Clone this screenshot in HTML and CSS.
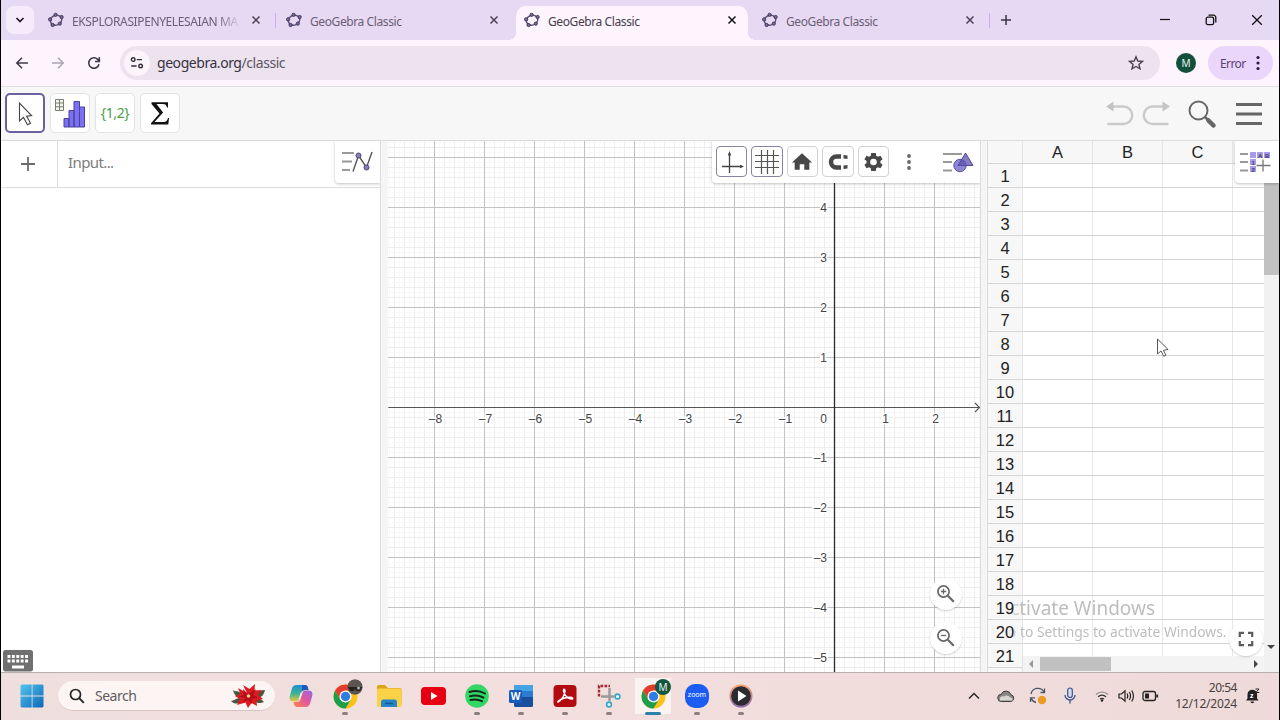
FILE: index.html
```
<!DOCTYPE html>
<html lang="en">
<head>
    <meta charset="UTF-8">
    <meta name="viewport" content="width=device-width, initial-scale=1.0">
    <title>GeoGebra Classic</title>
    <link rel="stylesheet" href="styles.css">
</head>
<body>
    <svg class="defs" width="0" height="0">
        <symbol id="gg" viewBox="0 0 16 16">
            <ellipse cx="8" cy="8.2" rx="5.8" ry="4.9" transform="rotate(-18 8 8)" fill="none" stroke="#5d5377" stroke-width="1.5"/>
            <g fill="#776d96" stroke="#42395a" stroke-width="1">
                <circle cx="7.6" cy="2.8" r="1.6"/><circle cx="13.6" cy="5" r="1.6"/><circle cx="11.8" cy="11.6" r="1.6"/><circle cx="4.6" cy="13" r="1.6"/><circle cx="2.1" cy="7.4" r="1.6"/>
            </g>
        </symbol>
        <symbol id="x" viewBox="0 0 10 10"><path d="M1.5 1.5l7 7M8.5 1.5l-7 7" stroke="currentColor" stroke-width="1.5" fill="none"/></symbol>
        <symbol id="chrome" viewBox="0 0 24 24">
            <circle cx="12" cy="12" r="11.5" fill="#fbc116"/>
            <path d="M2 6.3A11.5 11.5 0 0 1 22 6.3H12L7 15z" fill="#e33b2e"/>
            <path d="M2 6.3A11.5 11.5 0 0 0 12 23.5L17 15 12 17 7 15z" fill="#1e9e4b"/>
            <circle cx="12" cy="12" r="5.8" fill="#fff"/><circle cx="12" cy="12" r="4.5" fill="#2f7de1"/>
        </symbol>
    </svg>

    <div class="tabstrip">
        <div class="tab-search"><svg width="10" height="10" viewBox="0 0 10 10"><path d="M1.5 3l3.5 3.5L8.5 3" stroke="#1f1a26" stroke-width="1.7" fill="none"/></svg></div>
        <div class="tab">
            <svg class="fav"><use href="#gg"/></svg>
            <span class="title long">EKSPLORASIPENYELESAIAN MA</span>
            <svg class="close"><use href="#x"/></svg>
        </div>
        <div class="tab sep">
            <svg class="fav"><use href="#gg"/></svg>
            <span class="title">GeoGebra Classic</span>
            <svg class="close"><use href="#x"/></svg>
        </div>
        <div class="tab active">
            <svg class="fav"><use href="#gg"/></svg>
            <span class="title">GeoGebra Classic</span>
            <svg class="close"><use href="#x"/></svg>
        </div>
        <div class="tab">
            <svg class="fav"><use href="#gg"/></svg>
            <span class="title">GeoGebra Classic</span>
            <svg class="close"><use href="#x"/></svg>
        </div>
        <div class="new-tab"><svg width="12" height="12" viewBox="0 0 12 12"><path d="M6 1v10M1 6h10" stroke="#3b3345" stroke-width="1.5"/></svg></div>
        <div class="window-buttons">
            <svg width="12" height="12" viewBox="0 0 12 12"><path d="M1 5.5h10" stroke="#111" stroke-width="1.2"/></svg>
            <svg width="12" height="12" viewBox="0 0 12 12"><g fill="none" stroke="#111" stroke-width="1.3"><rect x="1.2" y="3.2" width="7.4" height="7.4" rx="1.6"/><path d="M3.5 1.2h5a2.3 2.3 0 0 1 2.3 2.3v5"/></g></svg>
            <svg width="12" height="12" viewBox="0 0 12 12"><path d="M1.2 1.2l9.6 9.6M10.8 1.2l-9.6 9.6" stroke="#111" stroke-width="1.3"/></svg>
        </div>
    </div>

    <div class="navbar">
        <div class="nav-buttons">
            <svg width="14" height="14" viewBox="0 0 14 14"><path d="M13 7H2M7 1.8L1.8 7 7 12.2" fill="none" stroke="#3f3847" stroke-width="1.5"/></svg>
            <svg width="14" height="14" viewBox="0 0 14 14"><path d="M1 7h11M7 1.8L12.2 7 7 12.2" fill="none" stroke="#aaa3b0" stroke-width="1.4"/></svg>
            <svg width="14" height="14" viewBox="0 0 14 14"><path d="M12 8.2a5.2 5.2 0 1 1-1.3-4.8L12 4.8M12.3 1.3v4.2H8" fill="none" stroke="#3f3847" stroke-width="1.6"/></svg>
        </div>
        <div class="address">
            <div class="site-info"><svg width="14" height="14" viewBox="0 0 14 14"><g fill="none" stroke="#35303c" stroke-width="1.4"><circle cx="3.2" cy="3.6" r="1.8"/><path d="M6.8 3.6H12M1.2 10H6.6"/><circle cx="10.6" cy="10" r="1.8"/></g></svg></div>
            <span class="url">geogebra.org<span class="path">/classic</span></span>
            <svg class="star" width="16" height="16" viewBox="0 0 16 16"><path d="M8 1.8l1.8 4.2 4.6.4-3.500 3 1.100 4.500L8 11.500l-4 2.400 1.100-4.500-3.500-3 4.600-.4z" fill="none" stroke="#4a4351" stroke-width="1.4"/></svg>
        </div>
        <div class="avatar">M</div>
        <div class="error"><span>Error</span><svg width="4" height="16" viewBox="0 0 4 16"><g fill="#2d1b46"><circle cx="2" cy="2.5" r="1.6"/><circle cx="2" cy="8" r="1.6"/><circle cx="2" cy="13.5" r="1.6"/></g></svg></div>
    </div>

    <div class="toolbar">
        <div class="tool selected"><svg width="36" height="36" viewBox="0 0 36 36"><path d="M12.500 8v18l4-3.600 4 7.400 3-1.500-3.900-7.200 5-.6z" fill="#fff" stroke="#444" stroke-width="1.100"/></svg></div>
        <div class="tool"><svg width="36" height="36" viewBox="0 0 36 36">
            <path d="M3.500 4.500h8v11h-8zM7.500 4.500v11M3.500 8h8M3.500 11.800h8" fill="#f2f2ee" stroke="#788074" stroke-width="1"/>
            <path d="M12 23.500h5v8.500h-5zM17 15.500h5V32h-5zM22 6.500h5.500V32H22zM27.500 12h5v20h-5z" fill="#7b70f2" stroke="#4b429c" stroke-width="1"/>
        </svg></div>
        <div class="tool braces">{1,2}</div>
        <div class="tool sigma"><svg width="36" height="36" viewBox="0 0 36 36"><path d="M9.500 7.300H26v5.200h-1c-.6-2.400-1.500-3.500-4.200-3.500h-6.300l6.600 8.600-8.600 9.300h8.900c2.900 0 3.800-1.300 4.600-3.900h1L26.300 29.500H9v-1.300l8.500-9.800-8-9.500z" fill="#111"/></svg></div>
        <div class="toolbar-right">
            <svg width="28" height="26" viewBox="0 0 28 26"><path d="M7 5.500h10.500a8.700 8.700 0 0 1 0 17.500H1.500" fill="none" stroke="#cacaca" stroke-width="2.400"/><path d="M0 5.500L7.500.5v10z" fill="#c4c4c4"/></svg>
            <svg width="28" height="26" viewBox="0 0 28 26"><path d="M21 5.500H10.500a8.700 8.700 0 0 0 0 17.500h16" fill="none" stroke="#cacaca" stroke-width="2.400"/><path d="M28 5.500L20.500.5v10z" fill="#c4c4c4"/></svg>
            <svg class="find" width="30" height="30" viewBox="0 0 30 30"><circle cx="11.500" cy="11.500" r="9" fill="none" stroke="#686868" stroke-width="2"/><path d="M18 18l4 4" stroke="#666" stroke-width="2.500"/><path d="M21.500 21.500l5 5" stroke="#666" stroke-width="4.500" stroke-linecap="round"/></svg>
            <svg width="28" height="26" viewBox="0 0 28 26"><path d="M1 3.500h26M1 13h26M1 22.500h26" stroke="#666" stroke-width="3"/></svg>
        </div>
    </div>

    <div class="views">
        <div class="algebra">
            <div class="input-row">
                <div class="plus"><svg width="16" height="16" viewBox="0 0 16 16"><path d="M8 1v14M1 8h14" stroke="#6b6b6b" stroke-width="1.800"/></svg></div>
                <div class="input">Input...</div>
            </div>
            <div class="style-button"><svg width="34" height="24" viewBox="0 0 34 24">
                <path d="M1 3h12M1 11.500h10M1 20h8" stroke="#999" stroke-width="2"/>
                <path d="M12 21.500L17.500 5.500 25.500 17.500 31 2" fill="none" stroke="#555" stroke-width="1.400"/>
                <circle cx="17.500" cy="5.500" r="2.500" fill="#8780c0" stroke="#4a4670"/><circle cx="25.500" cy="17.500" r="2.500" fill="#8780c0" stroke="#4a4670"/>
            </svg></div>
            <div class="keyboard"><svg width="30" height="22" viewBox="0 0 30 22"><rect width="30" height="21.500" rx="2.500" fill="#707070"/>
                <path d="M4.500 6.500h21.500M4.500 11h21.500" stroke="#fff" stroke-width="3" stroke-dasharray="2.900 1.500"/><path d="M9 17h12" stroke="#fff" stroke-width="3"/></svg></div>
        </div>

        <div class="graphics">
            <svg class="plot" width="592" height="531" viewBox="388 141 592 531">
                <defs>
                    <pattern id="minor" x="384" y="157" width="10" height="10" patternUnits="userSpaceOnUse">
                        <path d="M5.500 0v10M0 5.500h10" stroke="#f9f9f9"/>
                        <path d="M.5 0v10M0 .5h10" stroke="#eee"/>
                    </pattern>
                    <pattern id="major" x="384" y="157" width="50" height="50" patternUnits="userSpaceOnUse">
                        <path d="M.5 0v50M0 .5h50" stroke="#c2c2c2"/>
                    </pattern>
                </defs>
                <rect x="388" y="141" width="592" height="531" fill="url(#minor)"/>
                <rect x="388" y="141" width="592" height="531" fill="url(#major)"/>
                <path d="M388.500 407.500h591M975 403l4.500 4.500-4.500 4.500" fill="none" stroke="#555" stroke-width="1.200"/>
                <path d="M834.500 141v531" stroke="#2b2b2b" stroke-width="1.300"/>
                <g class="labels" text-anchor="middle">
                    <text x="435.500" y="423">–8</text><text x="485.500" y="423">–7</text><text x="535.500" y="423">–6</text><text x="585.500" y="423">–5</text>
                    <text x="635.500" y="423">–4</text><text x="685.500" y="423">–3</text><text x="735.500" y="423">–2</text><text x="785.500" y="423">–1</text>
                    <text x="823.500" y="423">0</text><text x="885.500" y="423">1</text><text x="935.500" y="423">2</text>
                </g>
                <g class="labels" text-anchor="end">
                    <text x="827" y="212">4</text><text x="827" y="262">3</text><text x="827" y="312">2</text><text x="827" y="362">1</text>
                    <text x="827" y="462">–1</text><text x="827" y="512">–2</text><text x="827" y="562">–3</text><text x="827" y="612">–4</text><text x="827" y="662">–5</text>
                </g>
            </svg>
            <div class="stylebar">
                <div class="sb on"><svg width="26" height="26" viewBox="0 0 26 26"><path d="M10.500 24V4M3 17.500h20" stroke="#444" stroke-width="1.300"/><path d="M10.500 2l1.700 4.500H8.800zM25 17.500l-4-1.700v3.400z" fill="#444"/></svg></div>
                <div class="sb on"><svg width="26" height="26" viewBox="0 0 26 26"><path d="M7.500 1v24M13.500 1v24M19.500 1v24M1 6.500h24M1 12.500h24M1 18.500h24" stroke="#555" stroke-width="1.200"/></svg></div>
                <div class="sb"><svg width="22" height="22" viewBox="0 0 24 24"><path d="M9.500 20.500v-6h5v6h5.500v-8h3L12 2.500 1 12.500h3v8z" fill="#484848"/></svg></div>
                <div class="sb"><svg width="24" height="22" viewBox="0 0 24 22"><path d="M15 5.500h-4.500a5.500 5.500 0 0 0 0 11H15" fill="none" stroke="#484848" stroke-width="4.500"/><path d="M17.500 4l4 .6v3.400l-4-.6zM17.500 14.600l4-.6v3.400l-4 .6z" fill="#484848"/></svg></div>
                <div class="sb"><svg width="24" height="24" viewBox="0 0 24 24"><path d="M19.400 13a7 7 0 0 0 0-2l2.200-1.700-2.100-3.600-2.600 1a8 8 0 0 0-1.700-1L14.800 3H10.200l-.4 2.700a8 8 0 0 0-1.700 1l-2.600-1-2.100 3.600L5.600 11a7 7 0 0 0 0 2l-2.200 1.700 2.100 3.600 2.600-1a8 8 0 0 0 1.700 1l.4 2.700h4.600l.4-2.700a8 8 0 0 0 1.700-1l2.600 1 2.100-3.600z" fill="#484848"/><circle cx="12.500" cy="12" r="3.300" fill="#fff"/></svg></div>
                <div class="sb plain"><svg width="6" height="18" viewBox="0 0 6 18"><g fill="#666"><circle cx="3" cy="3" r="1.900"/><circle cx="3" cy="9" r="1.900"/><circle cx="3" cy="15" r="1.900"/></g></svg></div>
                <svg class="shapes" width="32" height="22" viewBox="0 0 32 22"><path d="M1 3h19M1 11h9M1 19.500h9" stroke="#999" stroke-width="2"/><circle cx="18" cy="14.500" r="6.200" fill="#8d86d8" stroke="#5b55a0"/><path d="M23.500 2L31 14.500H16z" fill="#5a51b2" fill-opacity=".75" stroke="#514a94"/></svg>
            </div>
            <div class="round zoom-in"><svg width="20" height="20" viewBox="0 0 20 20"><circle cx="7.500" cy="7.500" r="5.600" fill="none" stroke="#666" stroke-width="1.700"/><path d="M11.800 11.800l6 6" stroke="#666" stroke-width="2.200"/><path d="M4.800 7.500h5.400M7.500 4.800v5.400" stroke="#666" stroke-width="1.300"/></svg></div>
            <div class="round zoom-out"><svg width="20" height="20" viewBox="0 0 20 20"><circle cx="7.500" cy="7.500" r="5.600" fill="none" stroke="#666" stroke-width="1.700"/><path d="M11.800 11.800l6 6" stroke="#666" stroke-width="2.200"/><path d="M4.800 7.500h5.400" stroke="#666" stroke-width="1.300"/></svg></div>
        </div>

        <div class="sheet">
            <div class="col-heads"><span class="corner"></span><span>A</span><span>B</span><span>C</span></div>
            <div class="sheet-body">
                <div class="row-heads">
                    <span>1</span><span>2</span><span>3</span><span>4</span><span>5</span><span>6</span><span>7</span>
                    <span>8</span><span>9</span><span>10</span><span>11</span><span>12</span><span>13</span><span>14</span>
                    <span>15</span><span>16</span><span>17</span><span>18</span><span>19</span><span>20</span><span>21</span>
                </div>
                <div class="cells-wrap">
                    <div class="cells"></div>
                    <div class="hscroll">
                        <svg width="16" height="16" viewBox="0 0 16 16"><path d="M10 4v8L6 8z" fill="#999"/></svg>
                        <div class="hthumb"></div>
                        <svg class="right" width="16" height="16" viewBox="0 0 16 16"><path d="M6 4v8l4-4z" fill="#444"/></svg>
                    </div>
                </div>
                <div class="vscroll">
                    <div class="vthumb"></div>
                    <svg width="14" height="14" viewBox="0 0 14 14"><path d="M3 5h8l-4 4z" fill="#444"/></svg>
                </div>
            </div>
            <div class="watermark">
                <div class="big">Activate Windows</div>
                <div class="small">Go to Settings to activate Windows.</div>
            </div>
            <div class="style-button sheet-style"><svg width="32" height="22" viewBox="0 0 32 22">
                <path d="M1 3h8M1 11h8M1 19.500h8" stroke="#999" stroke-width="2"/>
                <path d="M11 1h6v6h-6zM18 1h6v6h-6zM25 1h6v6h-6zM11 8h6v6h-6zM11 15h6v6h-6z" fill="#a79cec"/>
                <path d="M17.500 14.500h14M24 8.500v12" stroke="#777" stroke-width="1.300"/>
                <g class="tiny"><text x="19" y="6.500">A</text><text x="26" y="6.500">B</text><text x="12.500" y="13.500">1</text><text x="12.500" y="20.500">2</text></g>
            </svg></div>
            <div class="round fullscreen"><svg width="16" height="16" viewBox="0 0 16 16"><path d="M1.800 6V1.800H6M10 1.800h4.200V6M14.200 10v4.200H10M6 14.200H1.800V10" fill="none" stroke="#5c5c5c" stroke-width="2.200"/></svg></div>
            <svg class="pointer" width="14" height="20" viewBox="0 0 14 20"><path d="M1.500 1v15l3.500-3 2.700 5.300 2.200-1.100-2.500-4.900 4.700-.8z" fill="#fff" stroke="#555"/></svg>
        </div>
    </div>

    <div class="taskbar">
        <div class="start"><svg width="24" height="24" viewBox="0 0 24 24"><defs><linearGradient id="win" x1="0" y1="0" x2="1" y2="1"><stop offset="0" stop-color="#52c5ee"/><stop offset="1" stop-color="#0a68b8"/></linearGradient></defs><path d="M1.500.5h10.200v11H.5v-10zM12.500.5h10l1 1v10h-11zM.5 12.400h11.200v11.100H1.500l-1-1zM12.500 12.400h11v10l-1 1.100h-10z" fill="url(#win)"/></svg></div>
        <div class="search">
            <svg width="16" height="16" viewBox="0 0 16 16"><circle cx="6.500" cy="6.500" r="5" fill="none" stroke="#222" stroke-width="1.700"/><path d="M10.200 10.200l4.600 4.600" stroke="#222" stroke-width="1.900"/></svg>
            <span>Search</span>
            <svg class="flower" width="34" height="24" viewBox="0 0 34 24">
                <path d="M10 9C5 6 4 8 2 6c1 4 3 7 7 8-4 0-6 3-9 3 4 4 9 3 12-1zM24 9c4-1 6-3 10-3-1 5-4 8-8 8 3 0 5 2 7 4-4 2-8 1-11-2z" fill="#48563f"/>
                <path d="M16 9L12 1l6.500 4L24 0l-.5 6.500L31 6l-4 5 5 4-6.500 1.500L26 22l-5.500-3L17 24l-2.500-5.500L6 21l3-6-5-3 5.500-2L7 4z" fill="#dc1a20"/>
                <path d="M17 10l-5-5 1 5.500L8 13l6 .5L12 19l5-3.500 4 4.500-.5-5.500L27 14l-5-3 3-6-6 4z" fill="#b20f19"/><circle cx="17.500" cy="12" r="1.800" fill="#f0d08a"/>
            </svg>
        </div>
        <div class="apps">
            <div class="app"><svg width="24" height="24" viewBox="0 0 24 24"><defs><linearGradient id="c1" x1="0" y1="0" x2="0" y2="1"><stop offset="0" stop-color="#1c8edb"/><stop offset=".55" stop-color="#3fb68b"/><stop offset="1" stop-color="#f2c744"/></linearGradient><linearGradient id="c2" x1="1" y1="0" x2="0" y2="1"><stop offset="0" stop-color="#9566e8"/><stop offset=".5" stop-color="#e4589c"/><stop offset="1" stop-color="#f98a4e"/></linearGradient></defs>
                <path d="M7.500 1H16c2.500 0 3 2.500 3.500 5H16c-2 0-3 .8-3.500 3l-2 6c-.7 2-1.500 2.500-3.500 2.500H4.500C.8 17.500 0 14.500.8 12l2-7C3.500 2.500 5 1 7.500 1z" fill="url(#c1)"/><path d="M13 1h3c2.500 0 3 2.500 3.500 5H16c-1.500 0-2.500.5-3 1.500z" fill="#2359bd"/>
                <path d="M16.500 23H8c-2.500 0-3-2.500-3.500-5H8c2 0 3-.8 3.500-3l2-6c.7-2 1.500-2.500 3.500-2.500h2.500c3.700 0 4.500 3 3.700 5.500l-2 7c-.7 2.500-2.200 4-4.700 4z" fill="url(#c2)"/><path d="M13.200 8.500l-2.200 7H9.500l2.200-7z" fill="#f8e8ea"/></svg></div>
            <div class="app running"><svg width="25" height="25"><use href="#chrome"/></svg><svg class="badge" width="16" height="16" viewBox="0 0 16 16"><circle cx="8" cy="8" r="7.700" fill="#5b5550"/><path d="M1 8h14l-2 4H9.500L8 10l-1.500 2H3z" fill="#25211f"/><circle cx="11.500" cy="9" r="1.500" fill="#aaa"/></svg></div>
            <div class="app"><svg width="26" height="24" viewBox="0 0 26 24"><path d="M1 3a2 2 0 0 1 2-2h6l3 3h12a1.500 1.500 0 0 1 1.500 1.500V20H1z" fill="#dca315"/><rect x="1" y="4.500" width="24.500" height="18.500" rx="1.500" fill="#fbd145"/><path d="M5 23v-5a2.500 2.500 0 0 1 2.500-2.500h11A2.500 2.500 0 0 1 21 18v5z" fill="#2583c7"/><path d="M9 19.500h8" stroke="#165b98" stroke-width="1.500"/></svg></div>
            <div class="app"><svg width="25" height="18" viewBox="0 0 25 18"><rect width="25" height="18" rx="4" fill="#e60012"/><path d="M10 5v8l6.500-4z" fill="#fff"/></svg></div>
            <div class="app running"><svg width="24" height="24" viewBox="0 0 24 24"><circle cx="12" cy="12" r="11.800" fill="#34d665"/><path d="M4.500 8c5-1.500 11-1 15.500 1.500M5 12.200c4.500-1.300 9.500-.8 13.500 1.400M5.500 16c4-1 8-.6 11.500 1.200" stroke="#102818" stroke-width="2" fill="none" stroke-linecap="round"/></svg></div>
            <div class="app running"><svg width="24" height="24" viewBox="0 0 24 24"><rect x="5" y="1" width="19" height="22" rx="1.500" fill="#174f9d"/><path d="M5 2.500A1.500 1.500 0 0 1 6.500 1h16A1.500 1.500 0 0 1 24 2.500V7H5z" fill="#43a3e5"/><path d="M5 7h19v6H5z" fill="#2b7cd0"/><rect x="0" y="6" width="13" height="13" rx="1.500" fill="#185abd"/><text class="word" x="6.500" y="16">W</text></svg></div>
            <div class="app running"><svg width="24" height="24" viewBox="0 0 24 24"><rect x=".5" y="1" width="23" height="22" rx="4" fill="#b30b10"/><path d="M5 18c3-1 7-7 7-11 0-2.500-2-2-1.500 0 1 4 4 8 8 8 2.500 0 1-2-2-1.800-4 .2-8 1.500-10.500 3.300-1.300 1-1.500 1.800-1 1.500z" fill="none" stroke="#fff" stroke-width="1.400"/></svg></div>
            <div class="app running"><svg width="24" height="24" viewBox="0 0 24 24"><path d="M2 12.500V2h11" fill="none" stroke="#a52b32" stroke-width="2.400" stroke-dasharray="2.700 1.300"/><path d="M4 12.500h13M12.500 4v13" stroke="#999" stroke-width="2.400"/><g fill="#eefaff" stroke="#32a5c8" stroke-width="1.600"><circle cx="20.500" cy="12.500" r="2.400"/><circle cx="12" cy="20.500" r="2.400"/></g></svg></div>
            <div class="app running current"><svg width="25" height="25"><use href="#chrome"/></svg><span class="badge m">M</span></div>
            <div class="app running"><div class="zoom">zoom</div></div>
            <div class="app running"><svg width="24" height="24" viewBox="0 0 24 24"><defs><linearGradient id="mp" x1="0" y1="0" x2="0" y2="1"><stop offset="0" stop-color="#f5a06c"/><stop offset="1" stop-color="#8d6aa8"/></linearGradient></defs><circle cx="12" cy="12" r="11.500" fill="url(#mp)"/><circle cx="12" cy="12" r="9.800" fill="#2c2931"/><path d="M9 6.500v11l8.500-5.500z" fill="#fff"/></svg></div>
        </div>
        <div class="tray">
            <svg class="chev" width="12" height="8" viewBox="0 0 12 8"><path d="M1 6.500l5-5 5 5" fill="none" stroke="#222" stroke-width="1.400"/></svg>
            <svg class="cloud" width="18" height="14" viewBox="0 0 18 14"><path d="M4.500 12.500a3.600 3.600 0 0 1-.3-7.200 5.200 5.200 0 0 1 9.800.5 3.400 3.400 0 0 1-.3 6.700z" fill="#8b8785" stroke="#3e3b3a"/><path d="M3 11.500a3 3 0 0 1 4-4c2-2 5-1 6 1 2 0 3 1.500 2.500 3z" fill="#d9d6d2"/></svg>
            <svg class="sync" width="18" height="18" viewBox="0 0 18 18"><path d="M2 7a7 7 0 0 1 13-2M15.500 1.500V5.500H11.500M7 15.500A7 7 0 0 1 2 11M1.500 15v-4.200H6" fill="none" stroke="#4d566b" stroke-width="1.300"/><circle cx="13" cy="13" r="4.200" fill="#ed9a22"/></svg>
            <svg class="mic" width="12" height="18" viewBox="0 0 12 18"><rect x="3.700" y="1" width="4.600" height="9.500" rx="2.300" fill="#d5dbf1" stroke="#37558f" stroke-width="1.200"/><path d="M1 8a5 5 0 0 0 10 0M6 13v3.500" fill="none" stroke="#37558f" stroke-width="1.300"/></svg>
            <svg class="wifi" width="14" height="12" viewBox="0 0 14 12"><g fill="none" stroke="#333" stroke-width="1.200"><path d="M1 4.500a8.500 8.500 0 0 1 12 0" stroke="#888"/><path d="M3 6.900a5.600 5.600 0 0 1 8 0M5 9.200a2.800 2.800 0 0 1 4 0"/></g><circle cx="7" cy="10.500" r="1.200" fill="#222"/></svg>
            <svg class="speaker" width="17" height="14" viewBox="0 0 17 14"><g fill="none" stroke="#222" stroke-width="1.200"><path d="M1 5h2.500L7 1.800v10.400L3.500 9H1z"/><path d="M9 4.500q1.500 2.500 0 5M11.300 3q2.500 4 0 8M13.700 1.500q3.500 5.500 0 11"/></g></svg>
            <svg class="battery" width="17" height="12" viewBox="0 0 17 12"><rect x="1" y="1.500" width="12.500" height="9" rx="2" fill="none" stroke="#222" stroke-width="1.300"/><path d="M3 3.500h4v5H3z" fill="#222"/><path d="M15.200 4.500v3" stroke="#222" stroke-width="1.800"/></svg>
            <div class="clock"><div>20:54</div><div class="date">12/12/2024</div></div>
            <svg class="bell" width="14" height="16" viewBox="0 0 14 16"><path d="M0 12.500l1.500-2V6.500a4.800 4.800 0 0 1 9.600 0v4l1.500 2zM4.500 13.500h3.600a1.800 1.800 0 0 1-3.600 0z" fill="#222"/><text x="4" y="10">z</text><path d="M9.500 1h3.500L9.800 4.500h3.500" fill="none" stroke="#222"/></svg>
        </div>
    </div>
</body>
</html>
```
FILE: styles.css
```
* {
    box-sizing: border-box;
}
body {
    margin: 0;
    width: 1280px;
    height: 720px;
    overflow: hidden;
    display: flex;
    flex-direction: column;
    border-left: 1px solid #000;
    border-right: 1px solid #000;
    font-family: "Noto Sans", "Open Sans", sans-serif;
    background: #fff;
}
svg {
    display: block;
    flex-shrink: 0;
}
.defs {
    position: absolute;
}

/* browser tabs */
.tabstrip {
    height: 40px;
    flex-shrink: 0;
    background: #e7d9f3;
    display: flex;
    align-items: flex-start;
    padding: 6px 0 0 5px;
}
.tab-search {
    width: 28px;
    height: 28px;
    border-radius: 8px;
    background: #f5ebfb;
    display: flex;
    align-items: center;
    justify-content: center;
    margin-right: 6px;
}
.tab {
    width: 238px;
    height: 34px;
    padding: 0 14px 6px 8px;
    display: flex;
    align-items: center;
    position: relative;
    color: #6a6075;
}
.tab .fav {
    width: 16px;
    height: 16px;
    margin-right: 8px;
}
.tab .title {
    width: 170px;
    font-size: 12px;
    letter-spacing: -0.4px;
    line-height: 16px;
    white-space: nowrap;
    overflow: hidden;
    margin-top: 3px;
}
.tab .title.long {
    letter-spacing: -0.39px;
    -webkit-mask-image: linear-gradient(to right, #000 145px, transparent 170px);
    mask-image: linear-gradient(to right, #000 145px, transparent 170px);
}
.tab .close {
    width: 10px;
    height: 10px;
    margin-left: 9px;
    color: #4a4153;
}
.tab.sep::before {
    content: "";
    position: absolute;
    left: -3px;
    top: 7px;
    width: 1px;
    height: 15px;
    background: #cfaef0;
}
.tab.active {
    color: #443d4b;
}
.tab.active::before {
    content: "";
    position: absolute;
    left: 0;
    right: 6px;
    top: 0;
    bottom: 0;
    border-radius: 10px 10px 0 0;
    background: #fdf4fd;
}
/* curved feet of the active tab */
.tab.active::after {
    content: "";
    position: absolute;
    left: -8px;
    right: -2px;
    bottom: 0;
    height: 8px;
    background:
        radial-gradient(circle at 0 0, transparent 8px, #fdf4fd 8px) left / 8px 8px no-repeat,
        radial-gradient(circle at 8px 0, transparent 8px, #fdf4fd 8px) right / 8px 8px no-repeat;
}
.tab.active > * {
    position: relative;
}
.tab.active .close {
    color: #16121b;
}
.new-tab {
    border-left: 1px solid #cfaef0;
    height: 15px;
    margin: 7px 0 0 -3px;
    padding: 1px 0 0 10px;
}
.window-buttons {
    display: flex;
    gap: 34px;
    margin: 8px 16px 0 auto;
}

/* address bar */
.navbar {
    height: 47px;
    flex-shrink: 0;
    background: #fdf4fd;
    border-bottom: 1px solid #e2dbe4;
    display: flex;
    align-items: center;
    padding: 0 5px 0 14px;
}
.nav-buttons {
    display: flex;
    gap: 22px;
    width: 105px;
}
.address {
    width: 1040px;
    height: 34px;
    border-radius: 17px;
    background: #ece3ef;
    display: flex;
    align-items: center;
    padding: 0 16px 0 4px;
}
.site-info {
    width: 26px;
    height: 26px;
    border-radius: 50%;
    background: #fbf4fb;
    display: flex;
    align-items: center;
    justify-content: center;
}
.url {
    font-size: 14px;
    letter-spacing: -0.45px;
    color: #38323f;
    margin: -1px 0 0 7px;
}
.path {
    color: #5d5665;
}
.star {
    margin-left: auto;
}
.avatar {
    width: 20px;
    height: 20px;
    margin: 0 12px 0 16px;
    border-radius: 50%;
    background: #12503c;
    color: #e8f3ee;
    font-size: 10px;
    line-height: 20px;
    text-align: center;
}
.error {
    width: 65px;
    height: 34px;
    border-radius: 17px;
    background: #ead5fb;
    color: #5a4273;
    font-size: 12px;
    display: flex;
    align-items: center;
    justify-content: space-between;
    padding: 0 13px 0 12px;
}
.error span {
    letter-spacing: -0.6px;
}

/* toolbar */
.toolbar {
    height: 54px;
    flex-shrink: 0;
    background: #f7f7f7;
    border-bottom: 1px solid #dadada;
    display: flex;
    align-items: center;
    gap: 5px;
    padding: 0 17px 0 4px;
}
.tool {
    width: 40px;
    height: 40px;
    background: #fff;
    border: 1px solid #e3e3e3;
    border-radius: 5px;
    display: flex;
    align-items: center;
    justify-content: center;
    margin-top: -1px;
}
.tool.selected {
    border: 2px solid #6a619f;
}
.braces {
    color: #4ba045;
    font-size: 14px;
    letter-spacing: -0.4px;
    padding-bottom: 2px;
}
.toolbar-right {
    margin: 1px -1px 0 auto;
    display: flex;
    align-items: center;
    gap: 8px;
}
.toolbar-right .find {
    margin: 0 9px 0 10px;
    position: relative;
    left: -1px;
}

/* views */
.views {
    flex: 1;
    min-height: 0;
    display: flex;
    background: #f5f5f5;
}
.algebra {
    width: 380px;
    background: #fff;
    border-right: 1px solid #dcdcdc;
    position: relative;
}
.input-row {
    height: 47px;
    display: flex;
    align-items: stretch;
    border-bottom: 1px solid #dedede;
}
.plus {
    width: 57px;
    border-right: 1px solid #dcdcdc;
    display: flex;
    align-items: center;
    justify-content: center;
    padding: 0 2px 1px 0;
}
.input {
    padding: 9px 10px;
    font-size: 15px;
    letter-spacing: -0.6px;
    line-height: 24px;
    color: #7d7d7d;
}
.style-button {
    position: absolute;
    top: 0;
    right: 0;
    width: 45px;
    height: 42px;
    background: #fff;
    border-bottom-left-radius: 4px;
    box-shadow: 0 1px 3px rgba(0, 0, 0, 0.25);
    display: flex;
    align-items: center;
    justify-content: center;
    clip-path: inset(0 0 -6px -6px);
}
.keyboard {
    position: absolute;
    left: 2px;
    bottom: 0;
}
.graphics {
    width: 593px;
    margin-left: 7px;
    background: #fff;
    border-right: 1px solid #dcdcdc;
    position: relative;
}
.labels {
    font-family: "Liberation Sans", Arial, sans-serif;
    font-size: 12px;
    fill: #444;
    stroke: #fff;
    stroke-width: 3px;
    paint-order: stroke;
}
.stylebar {
    position: absolute;
    top: 0;
    right: 0;
    width: 268px;
    height: 42px;
    background: #fff;
    border-bottom-left-radius: 4px;
    box-shadow: 0 1px 3px rgba(0, 0, 0, 0.25);
    display: flex;
    align-items: center;
    gap: 4px;
    padding: 0 0 1px 4px;
    clip-path: inset(0 0 -6px -6px);
}
.sb {
    width: 31.400px;
    height: 31px;
    border: 1px solid #d2d2d2;
    border-radius: 4px;
    display: flex;
    align-items: center;
    justify-content: center;
}
.sb.on {
    border-color: #8885a0;
}
.sb.plain {
    border: none;
}
.shapes {
    margin-left: 14px;
}
.round {
    position: absolute;
    width: 32px;
    height: 32px;
    border-radius: 50%;
    background: #fff;
    box-shadow: 0 1px 2px rgba(0, 0, 0, 0.18);
    display: flex;
    align-items: center;
    justify-content: center;
}
.zoom-in {
    right: 18px;
    bottom: 62px;
}
.zoom-out {
    right: 18px;
    bottom: 18px;
}

/* spreadsheet */
.sheet {
    flex: 1;
    margin-left: 6px;
    border-left: 1px solid #dcdcdc;
    position: relative;
    font-family: "Liberation Sans", Arial, sans-serif;
    font-size: 16.500px;
    color: #222;
    display: flex;
    flex-direction: column;
    overflow: hidden;
}
.col-heads {
    height: 23px;
    display: flex;
    background: #f7f7f7;
    border-bottom: 1px solid #d5d5d5;
}
.col-heads span {
    width: 70px;
    border-right: 1px solid #e4e4e4;
    text-align: center;
    line-height: 22px;
}
.col-heads .corner {
    width: 35px;
}
.sheet-body {
    flex: 1;
    min-height: 0;
    display: flex;
}
.row-heads {
    width: 35px;
    background: #f7f7f7;
    border-right: 1px solid #e4e4e4;
}
.row-heads span {
    display: block;
    position: relative;
    z-index: 2;
    height: 24px;
    border-bottom: 1px solid #d5d5d5;
    line-height: 24px;
    text-align: center;
}
.cells-wrap {
    width: 241px;
    display: flex;
    flex-direction: column;
}
.cells {
    flex: 1;
    background-color: #fff;
    background-image:
        linear-gradient(to bottom, transparent 23px, #d5d5d5 23px),
        linear-gradient(to right, transparent 69px, #e8e8e8 69px);
    background-size: 100% 24px, 70px 100%;
}
.hscroll {
    height: 16px;
    background: #f3f3f3;
    display: flex;
    align-items: center;
}
.hthumb {
    width: 71px;
    height: 14px;
    margin-left: 1px;
    background: #c1c1c1;
}
.hscroll .right {
    margin-left: auto;
}
.vscroll {
    flex: 1;
    background: #f1f1f1;
    display: flex;
    flex-direction: column;
    justify-content: space-between;
    padding-bottom: 18px;
}
.vthumb {
    height: 111px;
    background: #c1c1c1;
}
.watermark {
    position: absolute;
    z-index: 1;
    left: 10px;
    top: 454px;
    font-family: "Noto Sans", sans-serif;
    color: #bdbdbd;
    white-space: nowrap;
    -webkit-mask-image: linear-gradient(to right, transparent 6px, #000 24px);
    mask-image: linear-gradient(to right, transparent 6px, #000 24px);
}
.big {
    font-size: 19px;
    line-height: 27px;
}
.small {
    font-size: 13.800px;
    line-height: 20px;
}
.sheet-style {
    width: 44px;
    padding-right: 4px;
}
.tiny {
    font-size: 6px;
    font-weight: bold;
    fill: #3d3768;
}
.fullscreen {
    width: 34px;
    height: 34px;
    right: 16px;
    bottom: 16px;
    z-index: 2;
}
.pointer {
    position: absolute;
    left: 168px;
    top: 197px;
}

/* taskbar */
.taskbar {
    height: 48px;
    flex-shrink: 0;
    border-top: 1px solid #b9afae;
    background: linear-gradient(to right, #eedfdd, #f3dfde 40%, #eedad8);
    display: flex;
    align-items: center;
    padding-bottom: 1px;
}
.start {
    width: 57px;
    padding-left: 19px;
}
.search {
    width: 217px;
    height: 30px;
    border-radius: 15px;
    background: #fcf5f4;
    border-bottom: 1px solid #d4c5c3;
    display: flex;
    align-items: center;
    padding: 0 10px 0 11px;
    font-size: 14px;
    letter-spacing: -0.5px;
    color: #625c5c;
}
.search span {
    margin-left: 10px;
}
.flower {
    margin-left: auto;
}
.apps {
    display: flex;
    align-self: stretch;
    margin-left: 4px;
}
.app {
    width: 44px;
    position: relative;
    display: flex;
    align-items: center;
    justify-content: center;
}
.running::after {
    content: "";
    position: absolute;
    bottom: 4px;
    left: 19px;
    width: 6px;
    height: 3px;
    border-radius: 2px;
    background: #8b7f7e;
}
.current {
    background: linear-gradient(#fbf3f2, #fbf3f2) center / 36px 36px no-repeat;
}
.current::after {
    left: 14px;
    width: 16px;
    background: #2b7fac;
}
.badge {
    position: absolute;
    right: 4px;
    top: 6px;
    width: 16px;
    height: 16px;
    border-radius: 50%;
}
.badge.m {
    background: #14563f;
    color: #e8f3ee;
    font-size: 10px;
    line-height: 16px;
    text-align: center;
}
.word {
    font-size: 10px;
    font-weight: bold;
    fill: #fff;
    text-anchor: middle;
}
.zoom {
    width: 24px;
    height: 24px;
    border-radius: 10px;
    background: #1d5cf0;
    color: #fff;
    font-size: 7px;
    line-height: 22px;
    text-align: center;
}
.tray {
    margin-left: auto;
    display: flex;
    align-items: center;
    padding-right: 19px;
}
.cloud {
    margin-left: 17px;
}
.sync {
    margin-left: 14px;
}
.mic {
    margin-left: 17px;
}
.wifi {
    margin-left: 19px;
}
.speaker {
    margin-left: 9px;
}
.battery {
    margin-left: 7px;
}
.clock {
    width: 78px;
    font-size: 12px;
    letter-spacing: -0.5px;
    line-height: 16px;
    color: #4a4242;
    text-align: right;
}
.clock .date {
    letter-spacing: -0.2px;
}
.bell {
    margin-left: 9px;
}
.bell text {
    font-size: 7px;
    font-weight: bold;
    fill: #fff;
}
```
